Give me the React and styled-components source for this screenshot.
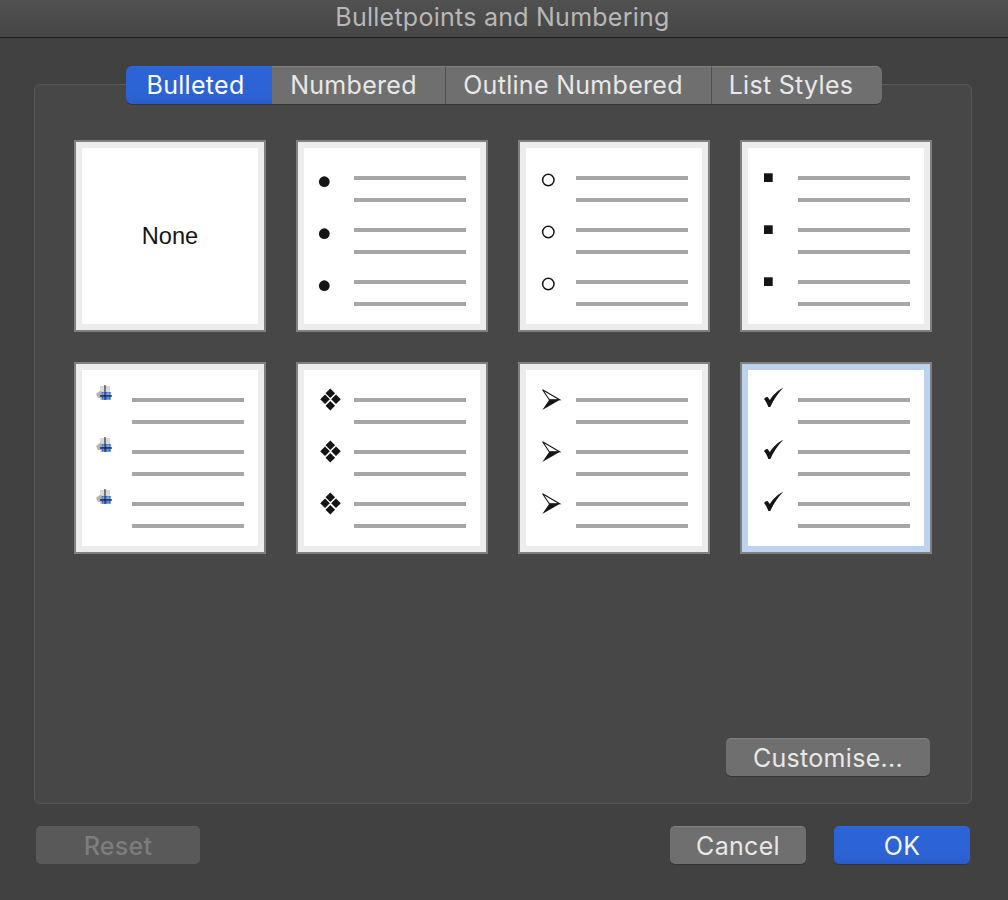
import React from "react";
import styled, { createGlobalStyle } from "styled-components";

const Global = createGlobalStyle`
  html, body { margin: 0; padding: 0; background: #424141; }
  * { box-sizing: border-box; }
`;

const sysFont = `Inter, "Noto Sans", "Liberation Sans", sans-serif`;

const Dialog = styled.div`
  width: 1008px;
  height: 900px;
  display: flex;
  flex-direction: column;
  background: #424141;
  font-family: ${sysFont};
  overflow: hidden;
`;

const TitleBar = styled.header`
  height: 38px;
  flex: none;
  display: flex;
  align-items: center;
  justify-content: center;
  padding: 0 3px 4px 0;
  background: linear-gradient(#515151, #464646);
  border-bottom: 1px solid #1f1f1f;
  color: #b8b8b8;
  font-size: 25px;
  letter-spacing: 0.25px;
`;

const Content = styled.main`
  flex: 1;
  display: flex;
  flex-direction: column;
  padding: 46px 38px 36px 34px;
`;

const GroupBox = styled.section`
  width: 938px;
  height: 720px;
  display: flex;
  flex-direction: column;
  padding: 0 41px 27px 39px;
  background: #474747;
  border: 1px solid #575757;
  border-radius: 6px;
`;

const TabBar = styled.nav`
  align-self: center;
  display: flex;
  height: 38px;
  margin: -19px 0 0 4px;
  border-radius: 6px;
  overflow: hidden;
  box-shadow: 0 1px 0 #353535;
`;

const Tab = styled.button`
  width: ${(p) => p.$w}px;
  height: 38px;
  padding: 0 ${(p) => p.$inset}px 2px 0;
  border: 0;
  border-left: ${(p) => (p.$divider ? "1px solid #505050" : "0")};
  border-top: 1px solid ${(p) => (p.$active ? "#2e66d8" : "#808080")};
  background: ${(p) =>
    p.$active ? "linear-gradient(#2c64d6 70%, #2a5cc8)" : "#706f6f"};
  color: ${(p) => (p.$active ? "#ffffff" : "#e8e8e8")};
  font-family: ${sysFont};
  font-size: 25px;
  letter-spacing: 0.3px;
`;

const Grid = styled.div`
  display: grid;
  grid-template-columns: repeat(4, 192px);
  grid-auto-rows: 192px;
  gap: 30px;
  margin-top: 36px;
`;

const Card = styled.div`
  border: 2px solid #808080;
  background: ${(p) => (p.$selected ? "#bdd2ee" : "#ececec")};
  padding: 6px;
`;

const CardInner = styled.div`
  width: 176px;
  height: 176px;
  background: #ffffff;
  display: flex;
  flex-direction: column;
  padding-top: 28px;
`;

const NoneInner = styled(CardInner)`
  padding-top: 0;
  align-items: center;
  justify-content: center;
  color: #151515;
  font-family: "Liberation Sans", Arial, sans-serif;
  font-size: 23.6px;
`;

const BulletRow = styled.div`
  height: 52px;
  flex: none;
  display: flex;
`;

const IconSvg = styled.svg`
  display: block;
  flex: none;
  width: 50px;
  height: 52px;
  overflow: visible;
`;

const Lines = styled.div`
  width: 112px;
  display: flex;
  flex-direction: column;
  gap: 18px;
`;

const Line = styled.div`
  height: 4px;
  background: #a6a6a6;
`;

const CustomiseRow = styled.div`
  margin-top: auto;
  display: flex;
  justify-content: flex-end;
`;

const Button = styled.button`
  width: ${(p) => p.$w}px;
  height: 38px;
  padding: 0;
  border: 0;
  border-top: 1px solid
    ${(p) => (p.$primary ? "#2e66d8" : p.$disabled ? "#5c5c5c" : "#808080")};
  border-radius: 5px;
  background: ${(p) =>
    p.$primary
      ? "linear-gradient(#2c64d6 70%, #2a5cc8)"
      : p.$disabled
      ? "#595959"
      : "#706f6f"};
  color: ${(p) => (p.$primary ? "#f4f4f4" : p.$disabled ? "#7d7d7d" : "#e8e8e8")};
  box-shadow: ${(p) => (p.$disabled ? "none" : "0 1px 0 #353535")};
  font-family: ${sysFont};
  font-size: 25px;
  font-weight: ${(p) => (p.$disabled ? 500 : 400)};
  letter-spacing: 0.3px;
`;

const Footer = styled.footer`
  display: flex;
  align-items: center;
  margin-top: 22px;
  padding-left: 2px;
`;

const FooterRight = styled.div`
  margin-left: auto;
  display: flex;
  gap: 28px;
`;

/* Icon coordinates: origin is the left edge of the white area at the top of the bullet's row. */
const Disc = () => <circle cx="20.3" cy="5.7" r="5.4" fill="#151515" />;
const Ring = () => (
  <circle cx="22.3" cy="4" r="5.7" fill="none" stroke="#151515" strokeWidth="1.5" />
);
const Square = () => <rect x="16" y="-2.7" width="8.7" height="8.7" fill="#151515" />;

const Bug = () => (
  <g>
    <rect x="18" y="-12" width="10" height="14" fill="#d9d9d9" />
    <path d="M14 -4 L18 -7 L21 -6 L21 0 L16 0 Z" fill="#b3b3b3" />
    <rect x="19.7" y="-6" width="9" height="7.7" fill="#2f6fe0" />
    <path d="M19.7 -4H28.7M19.7 -1.5H28.7M22 -6V2M26 -6V2" stroke="#a9c8f7" strokeWidth="0.7" />
    <rect x="22.4" y="-13" width="1.2" height="15" fill="#333333" />
    <rect x="18" y="-2.6" width="12" height="1.2" fill="#111111" />
  </g>
);

const diamond = (x, y, r = 4.8) =>
  `M${x} ${y - r}L${x + r} ${y}L${x} ${y + r}L${x - r} ${y}Z`;

const Diamonds = () => (
  <path
    fill="#151515"
    d={[
      diamond(26.3, -4.7),
      diamond(21, 1.3),
      diamond(32, 1.3),
      diamond(26.3, 7.7),
    ].join("")}
  />
);

const Arrow = () => (
  <g>
    <path
      d="M16.6 -8.2 L33.6 1.7 L23.3 1.7 Z"
      fill="#ffffff"
      stroke="#151515"
      strokeWidth="1.1"
    />
    <path d="M16.3 12 L34 1.7 L23.3 1.7 Z" fill="#151515" />
  </g>
);

const Check = () => (
  <path
    d="M16 1 C17.5 -0.8 19 -1.5 20 -0.5 L21.8 2 C25 -3 30 -8 35.3 -10.3 C30 -5 25.5 2 22.3 9 L20.3 9 C19.4 6 17.8 3 16 1 Z"
    fill="#151515"
  />
);

const cards = [
  { none: true },
  { Icon: Disc },
  { Icon: Ring },
  { Icon: Square },
  { Icon: Bug },
  { Icon: Diamonds },
  { Icon: Arrow },
  { Icon: Check, selected: true },
];

const Row = ({ Icon }) => (
  <BulletRow>
    <IconSvg viewBox="0 0 50 52">
      <Icon />
    </IconSvg>
    <Lines>
      <Line />
      <Line />
    </Lines>
  </BulletRow>
);

export default function App() {
  return (
    <Dialog>
      <Global />
      <TitleBar>Bulletpoints and Numbering</TitleBar>
      <Content>
        <GroupBox>
          <TabBar>
            <Tab $w={146} $inset={7} $active>Bulleted</Tab>
            <Tab $w={173} $inset={10}>Numbered</Tab>
            <Tab $w={266} $inset={11} $divider>Outline Numbered</Tab>
            <Tab $w={171} $inset={12} $divider>List Styles</Tab>
          </TabBar>
          <Grid>
            {cards.map((c, i) => (
              <Card key={i} $selected={c.selected}>
                {c.none ? (
                  <NoneInner>None</NoneInner>
                ) : (
                  <CardInner>
                    <Row Icon={c.Icon} />
                    <Row Icon={c.Icon} />
                    <Row Icon={c.Icon} />
                  </CardInner>
                )}
              </Card>
            ))}
          </Grid>
          <CustomiseRow>
            <Button $w={204}>Customise...</Button>
          </CustomiseRow>
        </GroupBox>
        <Footer>
          <Button $w={164} $disabled>Reset</Button>
          <FooterRight>
            <Button $w={136}>Cancel</Button>
            <Button $w={136} $primary>OK</Button>
          </FooterRight>
        </Footer>
      </Content>
    </Dialog>
  );
}
